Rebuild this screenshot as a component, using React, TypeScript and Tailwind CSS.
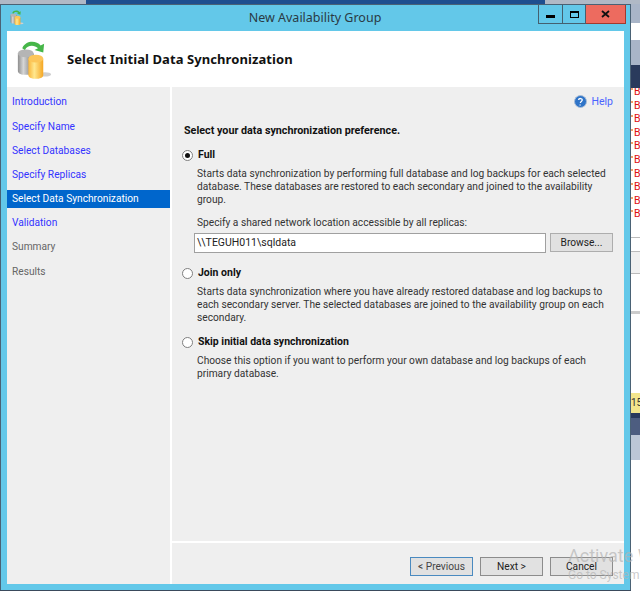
const font = "font-['Roboto','Noto_Sans',sans-serif]"

function DbIcon({ className }: { className: string }) {
  return (
    <svg viewBox="0 0 40 44" className={className}>
      <defs>
        <linearGradient id="grayCyl" x1="0" x2="1" y1="0" y2="0">
          <stop offset="0" stopColor="#8e8e8e" />
          <stop offset="0.35" stopColor="#d6d6d6" />
          <stop offset="1" stopColor="#6f6f6f" />
        </linearGradient>
        <linearGradient id="goldCyl" x1="0" x2="1" y1="0" y2="0">
          <stop offset="0" stopColor="#f9b53a" />
          <stop offset="0.4" stopColor="#ffe88f" />
          <stop offset="1" stopColor="#f5a623" />
        </linearGradient>
      </defs>
      <ellipse cx="32" cy="39" rx="7" ry="2.5" fill="#d0d0d0" />
      <path d="M1 15 v20 c0 6 18 6 18 0 v-20 z" fill="url(#grayCyl)" />
      <ellipse cx="10" cy="15" rx="9" ry="4.5" fill="#b5b5b5" />
      <path d="M13 21 v19 c0 5.500 17 5.500 17 0 v-19 z" fill="url(#goldCyl)" />
      <ellipse cx="21.500" cy="21" rx="8.500" ry="4.500" fill="#fcc659" />
      <path d="M6 9 C10 0 22 0 27 6 L31 4 L30 14 L20 11 L24 9 C20 5 12 5 9 11 z" fill="#46b649" />
    </svg>
  )
}

function Radio({ checked }: { checked?: boolean }) {
  return (
    <span className="flex h-[11px] w-[11px] shrink-0 items-center justify-center rounded-full border border-[#7f7f7f] bg-white">
      {checked && <span className="h-[5px] w-[5px] rounded-full bg-[#111]" />}
    </span>
  )
}

function Btn({ label, className }: { label: string; className: string }) {
  return (
    <div className={`flex h-[19px] w-[63px] items-center justify-center border bg-[#e1e1e1] text-[10.200px] text-[#222] ${className}`}>
      {label}
    </div>
  )
}

function Option({ label, checked, top, lines }: { label: string; checked?: boolean; top: string; lines: string[] }) {
  return (
    <div className={top}>
      <div className="flex h-[14px] items-center gap-[5px] pl-[10px]">
        <Radio checked={checked} />
        <span className="text-[10.500px] font-bold text-[#111]">{label}</span>
      </div>
      <div className="mt-[5px] pl-[25px] text-[10.200px] leading-[13px] text-[#333]">
        {lines.map((l) => (
          <div key={l} className="whitespace-nowrap">{l}</div>
        ))}
      </div>
    </div>
  )
}

const navItems = [
  { label: "Introduction", state: "link" },
  { label: "Specify Name", state: "link" },
  { label: "Select Databases", state: "link" },
  { label: "Specify Replicas", state: "link" },
  { label: "Select Data Synchronization", state: "active" },
  { label: "Validation", state: "link" },
  { label: "Summary", state: "off" },
  { label: "Results", state: "off" },
]

const redRows = [0, 1, 2, 3, 4, 5, 6, 7, 8, 9]

function BackgroundStrip() {
  return (
    <div className="flex w-[9px] shrink-0 flex-col overflow-hidden text-[10.500px]">
      <div className="h-[19px] bg-[#a9b5c8]" />
      <div className="h-[17px] bg-white" />
      <div className="h-[25px] bg-[#a9b5c8]" />
      <div className="h-[23px] bg-[#2a3a5c]" />
      <div className="h-[149px] overflow-hidden bg-white">
        <div className="-mt-[3px]">
          {redRows.map((r) => (
            <div key={r} className="flex h-[13.600px] items-center gap-[1px] text-[#e01010]">
              <span className="mb-[6px] h-[2px] w-[2px] shrink-0 bg-[#f0a070]" />
              <span className="leading-[13.600px]">B</span>
            </div>
          ))}
        </div>
      </div>
      <div className="h-[14px] border-t border-[#bbb] bg-white" />
      <div className="h-[23px] border-y border-[#bbb] bg-[#f0f0f0]" />
      <div className="h-[37px] bg-white" />
      <div className="h-[3px] bg-[#ccc]" />
      <div className="h-[79px] bg-white" />
      <div className="h-[20px] bg-[#f2e58c] text-[10px] leading-[20px] text-[#333]">15</div>
      <div className="h-[5px] bg-[#2a3a5c]" />
      <div className="h-[17px] bg-[#4d5d80]" />
      <div className="h-[25px] bg-[#bcc6d6]" />
      <div className="flex-1 bg-white" />
    </div>
  )
}

export default function App() {
  return (
    <div className={`relative flex h-[591px] w-[640px] flex-col overflow-hidden bg-white ${font}`}>
      <div className="flex h-[4px] shrink-0">
        <div className="w-[86px] bg-[#b0b9c6]" />
        <div className="w-[459px] bg-[#1e4f8f]" />
        <div className="flex-1 bg-[#b0b9c6]" />
      </div>

      <div className="flex min-h-0 flex-1">
        <div className="flex w-[631px] shrink-0 flex-col border border-b-0 border-[#4a6275] bg-[#63c8e9]">
          {/* title bar */}
          <div className="relative flex h-[26px] shrink-0 items-center justify-center pr-[1px] font-['Noto_Sans',sans-serif] text-[12.500px] text-[#2a3a44]">
            <DbIcon className="absolute left-[9px] top-[5px] h-[15px] w-[14px]" />
            <span>New Availability Group</span>
            <div className="absolute right-[4px] top-0 flex h-[19px]">
              <div className="flex w-[25px] items-end justify-center border-x border-b border-[#44606f] pb-[5px]">
                <span className="h-[3px] w-[9px] bg-black" />
              </div>
              <div className="flex w-[23px] items-center justify-center border-r border-b border-[#44606f]">
                <span className="h-[7px] w-[9px] border-[1.5px] border-t-[2px] border-black" />
              </div>
              <div className="flex w-[40px] items-center justify-center border-r border-b border-[#a3392d] bg-[#ed6b5f]">
                <svg viewBox="0 0 9 8" className="h-[8px] w-[9px]">
                  <path d="M1 1 L8 7 M8 1 L1 7" stroke="#111" strokeWidth="1.800" />
                </svg>
              </div>
            </div>
          </div>

          {/* dialog */}
          <div className="mx-[6px] flex min-h-0 flex-1 flex-col">
            <div className="flex h-[56px] shrink-0 items-center bg-white">
              <DbIcon className="ml-[10px] h-[41px] w-[35px]" />
              <span className="ml-[15px] mt-[2px] font-['Noto_Sans',sans-serif] text-[13px] font-bold tracking-[0.08px] text-[#111]">
                Select Initial Data Synchronization
              </span>
            </div>
            <div className="flex min-h-0 flex-1 bg-white">
              <div className="flex w-[163px] shrink-0 flex-col gap-[6.200px] bg-[#efefef] pt-[6px]">
                {navItems.map((n) => (
                  <div
                    key={n.label}
                    className={`flex h-[18px] items-center whitespace-nowrap pl-[5px] text-[10.200px] ${
                      n.state === "active"
                        ? "bg-[#0066cc] text-white"
                        : n.state === "link"
                          ? "text-[#3333ff]"
                          : "text-[#666]"
                    }`}
                  >
                    {n.label}
                  </div>
                ))}
              </div>
              <div className="ml-[2px] flex min-w-0 flex-1 flex-col">
                <div className="flex-1 bg-[#efefef]">
                  <div className="flex h-[28px] items-center justify-end gap-[4px] pr-[11px] pt-[1px]">
                    <svg viewBox="0 0 13 13" className="h-[13px] w-[13px]">
                      <circle cx="6.500" cy="6.500" r="6" fill="#2f74c8" stroke="#a9bdd6" />
                      <path d="M4.500 5 C4.800 3 8.500 3 8.200 5.200 C8 6.500 6.500 6.500 6.300 8 M6.100 9.500 L6.100 10.500" stroke="white" strokeWidth="1.300" fill="none" />
                    </svg>
                    <span className="text-[10.500px] text-[#4a64ff]">Help</span>
                  </div>
                  <div className="mt-[9px] pl-[12px] text-[10.750px] font-bold leading-[14px] text-[#111]">
                    Select your data synchronization preference.
                  </div>
                  <Option
                    top="mt-[10px]"
                    label="Full"
                    checked
                    lines={[
                      "Starts data synchronization by performing full database and log backups for each selected",
                      "database. These databases are restored to each secondary and joined to the availability",
                      "group.",
                    ]}
                  />
                  <div className="mt-[10px] pl-[25px] text-[10.200px] leading-[13px] text-[#333]">
                    Specify a shared network location accessible by all replicas:
                  </div>
                  <div className="mt-[4px] flex items-start gap-[4px] pl-[22px]">
                    <div className="flex h-[20px] w-[352px] items-center border border-[#a0a0a0] bg-white pl-[2px] text-[10.500px] text-[#222]">
                      \\TEGUH011\sqldata
                    </div>
                    <Btn label="Browse..." className="border-[#adadad]" />
                  </div>
                  <Option
                    top="mt-[13px]"
                    label="Join only"
                    lines={[
                      "Starts data synchronization where you have already restored database and log backups to",
                      "each secondary server. The selected databases are joined to the availability group on each",
                      "secondary.",
                    ]}
                  />
                  <Option
                    top="mt-[11px]"
                    label="Skip initial data synchronization"
                    lines={[
                      "Choose this option if you want to perform your own database and log backups of each",
                      "primary database.",
                    ]}
                  />
                </div>
                <div className="flex h-[43px] shrink-0 items-start justify-end gap-[7px] border-t-2 border-white bg-[#efefef] pr-[11px] pt-[14px]">
                  <Btn label="< Previous" className="border-[#4a8ac0] text-[#444]" />
                  <Btn label="Next >" className="border-[#8c8c8c]" />
                  <Btn label="Cancel" className="border-[#8c8c8c]" />
                </div>
              </div>
            </div>
          </div>
          <div className="h-[6px] shrink-0" />
        </div>
        <BackgroundStrip />
      </div>
      <div className="h-[1px] w-[631px] shrink-0 bg-[#3a4a5c]" />

      {/* windows watermark */}
      <div className="pointer-events-none absolute left-[568px] top-[545px] whitespace-nowrap text-[#b4b4b4]/70">
        <div className="text-[18px] leading-[22px]">Activate Windows</div>
        <div className="text-[12px] leading-[16px]">Go to System</div>
      </div>
    </div>
  )
}
